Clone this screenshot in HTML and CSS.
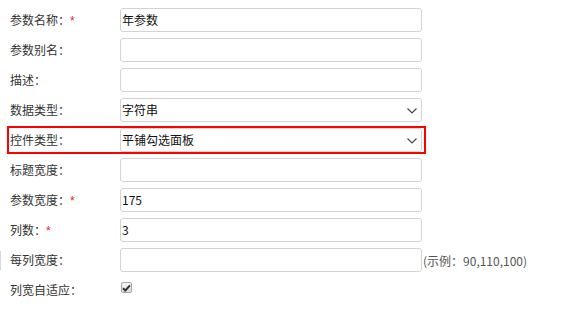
FILE: index.html
```html
<!DOCTYPE html>
<html lang="zh-CN">
<head>
<meta charset="utf-8">
<link rel="stylesheet" href="styles.css">
</head>
<body>
<div class="form">
  <div class="row">
    <span class="label">参数名称：<span class="req">*</span></span>
    <div class="field">年参数</div>
  </div>
  <div class="row">
    <span class="label">参数别名：</span>
    <div class="field"></div>
  </div>
  <div class="row">
    <span class="label">描述：</span>
    <div class="field"></div>
  </div>
  <div class="row">
    <span class="label">数据类型：</span>
    <div class="field select"><span>字符串</span><svg class="arrow" width="10" height="6" viewBox="0 0 10 6"><path d="M0.5 0.5 L5 5 L9.5 0.5" fill="none" stroke="#444" stroke-width="1.1"/></svg></div>
  </div>
  <div class="row hl">
    <span class="label">控件类型：</span>
    <div class="field select"><span>平铺勾选面板</span><svg class="arrow" width="10" height="6" viewBox="0 0 10 6"><path d="M0.5 0.5 L5 5 L9.5 0.5" fill="none" stroke="#444" stroke-width="1.1"/></svg></div>
  </div>
  <div class="row">
    <span class="label">标题宽度：</span>
    <div class="field"></div>
  </div>
  <div class="row">
    <span class="label">参数宽度：<span class="req">*</span></span>
    <div class="field">175</div>
  </div>
  <div class="row">
    <span class="label">列数：<span class="req">*</span></span>
    <div class="field">3</div>
  </div>
  <div class="row mark">
    <span class="tick"></span>
    <span class="label">每列宽度：</span>
    <div class="field"></div>
    <span class="hint">(示例：90,110,100)</span>
  </div>
  <div class="row last">
    <span class="label">列宽自适应：</span>
    <span class="check"><svg width="9" height="8" viewBox="0 0 9 8"><path d="M1 4.2 L3.3 6.5 L8 1.3" fill="none" stroke="#333" stroke-width="2"/></svg></span>
  </div>
</div>
</body>
</html>
```
FILE: styles.css
```css
html, body {
  margin: 0;
  padding: 0;
  background: #fff;
}
body {
  font-family: "Noto Sans CJK SC", "Noto Sans", sans-serif;
  font-size: 12px;
  color: #333;
}
.form {
  padding-top: 5px;
}
.row {
  display: flex;
  align-items: center;
  height: 30px;
  margin-left: 10px;
}
.label {
  width: 110px;
  flex: none;
  color: #333;
  white-space: nowrap;
  line-height: 16px;
}
.req {
  color: #e8202a;
  font-family: "Liberation Sans", sans-serif;
  font-size: 12px;
}
.field {
  width: 302px;
  height: 24px;
  box-sizing: border-box;
  border: 1px solid #d3d3d3;
  border-radius: 3px;
  padding: 0 0 0 1px;
  display: flex;
  align-items: center;
  color: #111;
  flex: none;
  line-height: 16px;
}
.select {
  justify-content: space-between;
  padding-right: 4px;
}
.arrow {
  display: block;
  margin-top: 1px;
}
.row.hl {
  width: fit-content;
  height: 28px;
  margin: 1px 0 1px 7px;
  padding: 0 2px 0 1px;
  border: 2px solid #f00;
  box-sizing: border-box;
}
.row.mark {
  margin-left: 0;
}
.tick {
  width: 1px;
  height: 19px;
  background: #d8d8d8;
  margin-right: 9px;
  flex: none;
}
.hint {
  color: #555;
  margin-left: 1px;
  white-space: nowrap;
}
.row.last {
  align-items: flex-start;
  padding-top: 7px;
  box-sizing: border-box;
}
.check {
  width: 11px;
  height: 11px;
  box-sizing: border-box;
  border: 1px solid #a8a8a8;
  border-radius: 2px;
  background: linear-gradient(#f6f6f6, #dcdcdc);
  display: flex;
  align-items: center;
  justify-content: center;
  margin-left: 1px;
}
.check svg {
  display: block;
}
```
